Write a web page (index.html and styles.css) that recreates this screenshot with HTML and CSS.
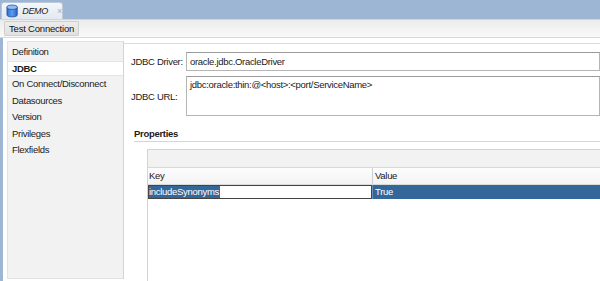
FILE: index.html
```html
<!DOCTYPE html>
<html>
<head>
<meta charset="utf-8">
<link rel="stylesheet" href="styles.css">
</head>
<body>
<div class="tabbar">
  <div class="tab">
    <svg class="dbicon" width="13" height="14" viewBox="0 0 13 14">
      <defs>
        <linearGradient id="g" x1="0" x2="1" y1="0" y2="0">
          <stop offset="0" stop-color="#2f6fd0"/>
          <stop offset="0.5" stop-color="#5a9df0"/>
          <stop offset="1" stop-color="#2d62c0"/>
        </linearGradient>
      </defs>
      <path d="M1 3 V11 A5.5 2.3 0 0 0 12 11 V3 Z" fill="url(#g)" stroke="#1d4b9a" stroke-width="0.8"/>
      <ellipse cx="6.5" cy="3" rx="5.5" ry="2.3" fill="#8ec0f7" stroke="#1d4b9a" stroke-width="0.8"/>
    </svg>
    <span class="tabtitle">DEMO</span>
    <span class="tabclose">×</span>
  </div>
</div>
<div class="toolbar">
  <button class="btn">Test Connection</button>
</div>
<div class="main">
  <div class="strip"></div>
  <div class="nav">
    <div class="navitem first">Definition</div>
    <div class="navitem active">JDBC</div>
    <div class="navitem">On Connect/Disconnect</div>
    <div class="navitem">Datasources</div>
    <div class="navitem">Version</div>
    <div class="navitem">Privileges</div>
    <div class="navitem">Flexfields</div>
  </div>
  <div class="content">
    <div class="row">
      <div class="label">JDBC Driver:</div>
      <div class="input">oracle.jdbc.OracleDriver</div>
    </div>
    <div class="row">
      <div class="label">JDBC URL:</div>
      <div class="input area">jdbc:oracle:thin:@&lt;host&gt;:&lt;port/ServiceName&gt;</div>
    </div>
    <div class="section">Properties</div>
    <div class="table">
      <div class="tbltop"></div>
      <div class="thead">
        <div class="c1">Key</div>
        <div class="c2">Value</div>
      </div>
      <div class="trow">
        <div class="c1 editor"><span class="sel">includeSynonyms</span></div>
        <div class="c2">True</div>
      </div>
    </div>
  </div>
</div>
</body>
</html>
```
FILE: styles.css
```css
html, body {
  margin: 0;
  padding: 0;
}
body {
  width: 600px;
  height: 281px;
  overflow: hidden;
  font-family: "Liberation Sans", Arial, sans-serif;
  font-size: 9.5px;
  letter-spacing: -0.3px;
  color: #1a1a1a;
  background: #fff;
  display: flex;
  flex-direction: column;
}
.tabbar {
  height: 19px;
  background: #9cb6d3;
  display: flex;
  align-items: flex-end;
  padding-left: 1px;
  box-sizing: border-box;
}
.tab {
  width: 62px;
  height: 17px;
  box-sizing: border-box;
  background: linear-gradient(#f4f6f9, #e3e9f0);
  border: 1px solid #b9c8da;
  border-bottom: none;
  border-radius: 3px 3px 0 0;
  display: flex;
  align-items: center;
  padding-left: 4px;
}
.dbicon {
  display: block;
}
.tabtitle {
  font-style: italic;
  margin-left: 4px;
  font-size: 9px;
  letter-spacing: -0.3px;
  color: #222;
}
.tabclose {
  margin-left: 9px;
  color: #aab;
  font-size: 9px;
}
.toolbar {
  height: 19px;
  box-sizing: border-box;
  background: linear-gradient(#ececec, #f9f9f9);
  border-top: 1px solid #cdd6e0;
  border-bottom: 1px solid #d9d9d9;
  display: flex;
  align-items: center;
  padding-left: 4px;
}
.btn {
  font-family: inherit;
  font-size: 9.5px;
  letter-spacing: -0.2px;
  height: 15px;
  padding: 0 4px;
  margin: 0;
  background: linear-gradient(#ececec, #e1e1e1);
  border: 1px solid #cfcfcf;
  border-radius: 1px;
  color: #111;
  line-height: 13px;
}
.main {
  flex: 1;
  display: flex;
  background: #fff;
}
.strip {
  width: 3px;
  background: #9cb6d3;
}
.nav {
  width: 117px;
  margin-left: 4px;
  margin-top: 3px;
  margin-bottom: 2px;
  background: #f2f2f2;
  border: 1px solid #e2e2e2;
  border-right: 1px solid #d4d4d4;
  box-sizing: border-box;
}
.navitem {
  height: 16.5px;
  line-height: 16px;
  padding-left: 4px;
}
.navitem.first {
  height: 19px;
  line-height: 20px;
}
.navitem.active {
  background: #fff;
  font-weight: bold;
  border-top: 1px solid #e4e4e4;
  border-bottom: 1px solid #e4e4e4;
  height: 13px;
  line-height: 13px;
}
.content {
  flex: 1;
  border-top: 1px solid #dcdcdc;
  margin-top: 5px;
  padding-top: 8px;
  padding-left: 7px;
  display: flex;
  flex-direction: column;
}
.row {
  display: flex;
  align-items: center;
  margin-bottom: 5px;
}
.label {
  width: 55px;
  flex: none;
  white-space: nowrap;
}
.input {
  flex: 1;
  height: 19px;
  box-sizing: border-box;
  border: 1px solid #b5b5b5;
  border-top-color: #9a9a9a;
  padding: 3px 3px;
  line-height: 12px;
  background: #fff;
  white-space: nowrap;
}
.input.area {
  height: 40px;
  padding-top: 2px;
}
.section {
  font-weight: bold;
  margin-top: 7px;
  margin-left: 3px;
  padding-bottom: 2px;
  border-bottom: 1px solid #d6d6d6;
  line-height: 11px;
}
.table {
  margin-top: 7px;
  margin-left: 16px;
  flex: 1;
  border-left: 1px solid #d4d4d4;
  border-top: 1px solid #d4d4d4;
  display: flex;
  flex-direction: column;
}
.tbltop {
  height: 17px;
  background: #f2f2f2;
  border-bottom: 1px solid #d8d8d8;
}
.thead {
  display: flex;
  height: 16px;
  background: linear-gradient(#fdfdfd, #f3f3f3);
  border-bottom: 1px solid #dadada;
  line-height: 16px;
}
.thead .c1 {
  width: 223px;
  border-right: 1px solid #cfcfcf;
  padding-left: 1px;
}
.thead .c2 {
  flex: 1;
  padding-left: 2px;
}
.trow {
  display: flex;
  height: 14px;
  line-height: 12px;
  background: #336699;
  color: #fff;
}
.trow .c1 {
  width: 224px;
  box-sizing: border-box;
  border: 1px solid #444;
  background: #fff;
}
.trow .c2 {
  flex: 1;
  padding-left: 2px;
  line-height: 14px;
  border-left: 1px solid #6b8fb7;
}
.sel {
  background: #336699;
  color: #fff;
  display: inline-block;
  padding-right: 1px;
}
```
